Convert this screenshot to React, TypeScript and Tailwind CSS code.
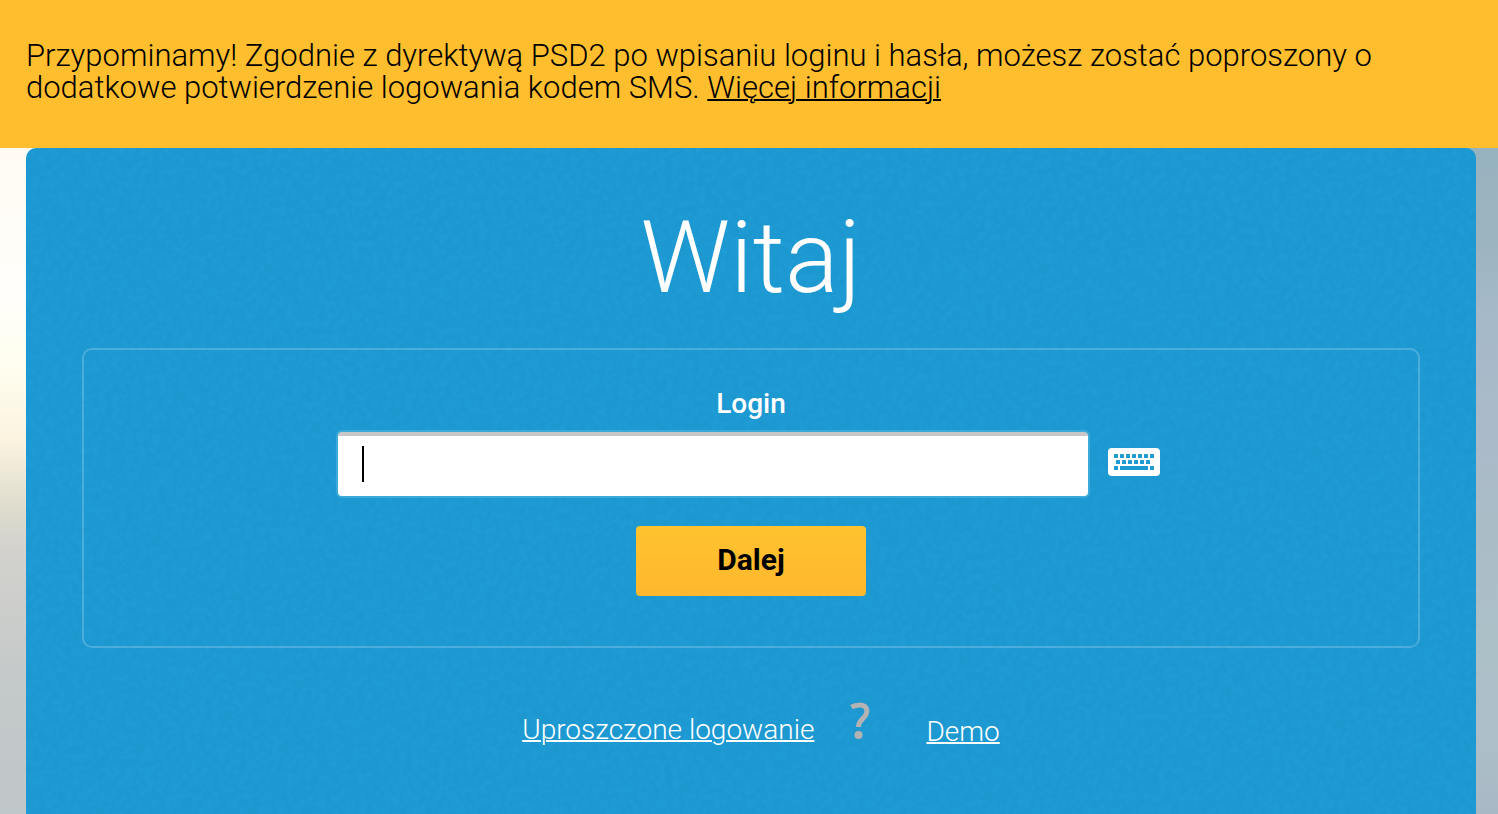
import { useState } from "react";

function KeyboardIcon() {
  const topRow = [6, 12, 18, 24, 30, 36, 42];
  const middleRow = [8, 14, 20, 26, 32, 38];

  return (
    <svg width="52" height="28" viewBox="0 0 52 28" aria-hidden="true">
      <rect width="52" height="28" rx="4" fill="#fff" />
      <g fill="#1e9ad3">
        {topRow.map((x) => (
          <rect key={x} x={x} y="6" width="4" height="4" rx="0.5" />
        ))}
        {middleRow.map((x) => (
          <rect key={x} x={x} y="12" width="4" height="4" rx="0.5" />
        ))}
        <rect x="6" y="18" width="4" height="4" rx="0.5" />
        <rect x="12" y="18" width="28" height="4" />
        <rect x="42" y="18" width="4" height="4" rx="0.5" />
      </g>
    </svg>
  );
}

function HelpIcon() {
  return (
    <svg width="20" height="38" viewBox="0 0 20 38" aria-hidden="true">
      <path
        d="M1.5 5.2C4 3.6 6.6 2.9 9.5 2.9c4.6 0 7.4 2.3 7.4 6.2 0 3.3-1.7 5.3-4.3 7.7-3 2.6-4 4.4-4.1 8.2"
        fill="none"
        stroke="#b3b3b3"
        strokeWidth="5"
      />
      <circle cx="8.5" cy="33" r="4" fill="#b3b3b3" />
    </svg>
  );
}

// Fine paper grain over the blue panel
function PanelGrain() {
  return (
    <svg className="pointer-events-none absolute inset-0 h-full w-full opacity-8" aria-hidden="true">
      <filter id="grain" colorInterpolationFilters="sRGB">
        <feTurbulence type="fractalNoise" baseFrequency="0.15" numOctaves="3" stitchTiles="stitch" />
        <feColorMatrix type="matrix" values="0 0 0 0 0.1  0 0 0 0 0.5  0 0 0 0 0.6  4 0 0 0 -1.6" />
      </filter>
      <rect width="100%" height="100%" filter="url(#grain)" />
    </svg>
  );
}

export default function App() {
  const [login, setLogin] = useState("");

  return (
    <div className="flex min-h-screen flex-col bg-[#c2c9ca] font-['Roboto',sans-serif]">
      {/* PSD2 notice */}
      <div className="bg-[#ffbe2e] px-[26px] pt-10 pb-11 text-[31px] leading-8 font-light text-black">
        <p>
          Przypominamy! Zgodnie z dyrektywą PSD2 po wpisaniu loginu i hasła, możesz zostać poproszony o
          dodatkowe potwierdzenie logowania kodem SMS.{" "}
          <a href="#psd2" className="underline decoration-2">
            Więcej informacji
          </a>
        </p>
      </div>

      <div className="grid flex-1 grid-cols-[26px_1fr_22px]">
        <div className="-mr-3 bg-[linear-gradient(#fffbf3_0%,#fffefa_22%,#fffef0_32%,#fbf3e0_44%,#dedccd_54%,#d2d1cd_61%,#c4c9c9_80%,#bfc6c9_100%)]" />

        <main className="relative overflow-hidden rounded-t-[10px] bg-[#1e9ad4] px-14 pt-[60px] pb-10 text-white">
          <PanelGrain />

          <div className="relative">
            <h1 className="text-center text-[100px] leading-[100px] font-light">Witaj</h1>

            <form
              className="mt-10 flex flex-col items-center rounded-[10px] border-2 border-white/20 pt-9 pb-[50px]"
              onSubmit={(e) => e.preventDefault()}
            >
              <label htmlFor="login" className="text-[28px] leading-9 font-medium">
                Login
              </label>

              <div className="mt-2.5 flex items-center gap-5 pr-1">
                <div className="relative">
                  <input
                    id="login"
                    type="text"
                    autoComplete="off"
                    value={login}
                    onChange={(e) => setLogin(e.target.value)}
                    className="block h-16 w-[750px] rounded border-t-4 border-[#c8c8c8] bg-white px-6 text-[28px] text-black caret-transparent ring-2 ring-[#3ba9da] outline-none"
                  />
                  {/* Caret */}
                  {login === "" && (
                    <span className="pointer-events-none absolute top-3.5 left-6 h-9 w-0.5 bg-black" />
                  )}
                </div>
                <button type="button" aria-label="Klawiatura ekranowa" className="pb-1">
                  <KeyboardIcon />
                </button>
              </div>

              <button
                type="submit"
                className="mt-[30px] h-[70px] w-[230px] rounded bg-linear-to-b from-[#ffc32f] to-[#ffb72d] pb-1 text-[30px] font-bold text-black"
              >
                Dalej
              </button>
            </form>

            {/* Other ways to sign in */}
            <div className="mt-[54px] flex items-start justify-center pl-5 text-[28px] leading-9 font-light">
              <a href="#uproszczone" className="mt-2.5 underline decoration-2">
                Uproszczone logowanie
              </a>
              <button type="button" aria-label="Pomoc" className="ml-9">
                <HelpIcon />
              </button>
              <a href="#demo" className="mt-3 ml-14 underline decoration-2">
                Demo
              </a>
            </div>
          </div>
        </main>

        <div className="-ml-3 bg-[linear-gradient(#97b3bf_0%,#9cb4c0_14%,#a5b9c8_25%,#abbac9_44%,#aabdc7_55%,#acc0c8_75%,#adbfc8_88%,#a8b9c5_100%)]" />
      </div>
    </div>
  );
}
